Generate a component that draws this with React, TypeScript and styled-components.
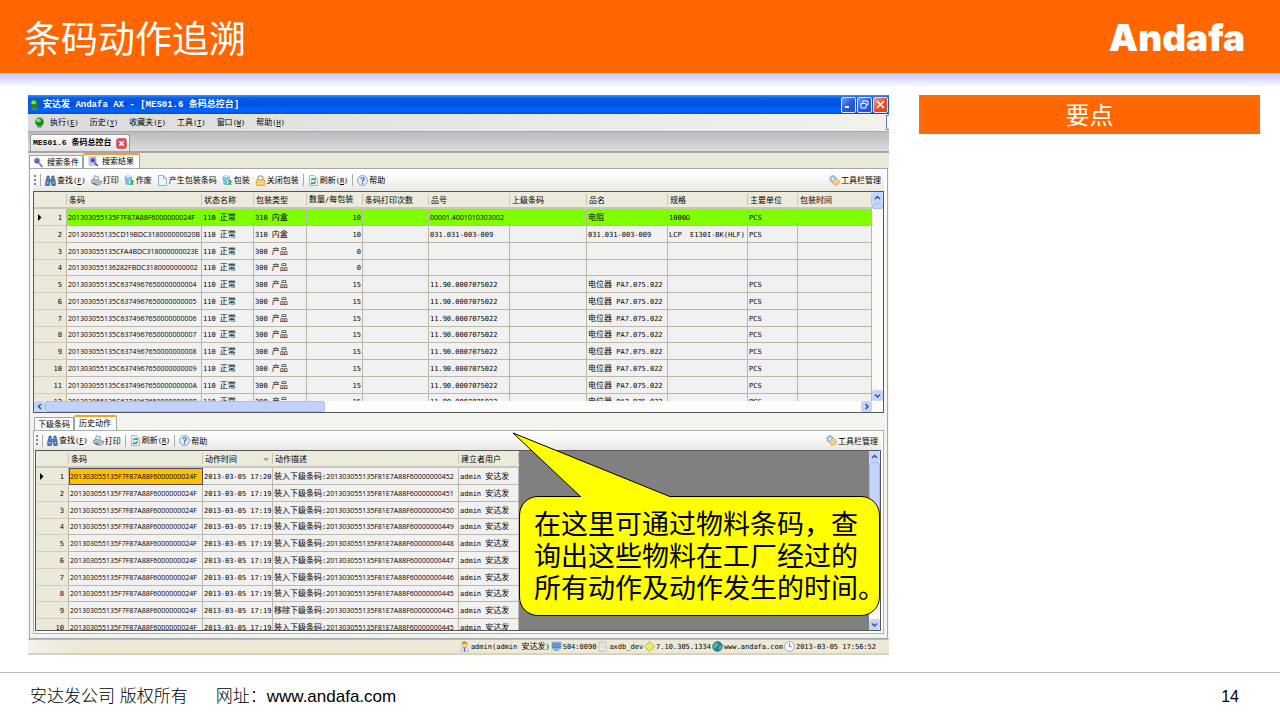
import React from "react";
import styled, { createGlobalStyle, css } from "styled-components";

const GlobalStyle = createGlobalStyle`
  *, *::before, *::after { box-sizing: border-box; }
  body { margin: 0; background: #fff; color: #000; font-family: "Liberation Sans", "Noto Sans CJK SC", sans-serif; }
  button { margin: 0; padding: 0; border: 0; background: none; color: inherit; font: inherit; white-space: nowrap; }
`;

/* ---------- slide ---------- */

const Slide = styled.div`
  display: flex;
  flex-direction: column;
  min-height: 100vh;
`;

const Header = styled.header`
  display: flex;
  align-items: center;
  justify-content: space-between;
  height: 73px;
  padding: 0 35px 0 24px;
  background: #ff6600;
  color: #fff;
`;

const Title = styled.h1`
  margin: 0;
  font: 400 37px/72px "Noto Sans CJK SC", sans-serif;
`;

const Brand = styled.div`
  font: 900 37px/76px Inter, sans-serif;
  padding-top: 2px;
`;

const HeaderShadow = styled.div`
  height: 14px;
  background: linear-gradient(#ccccff, #ccccff 20%, #fff);
`;

const Main = styled.main`
  flex: 1;
  display: grid;
  grid-template-columns: 861fr 341fr;
  align-items: start;
  gap: 30px;
  padding: 8px 20px 17px 28px;
`;

const KeyPoints = styled.h2`
  margin: 0;
  padding-bottom: 2px;
  background: #ff6600;
  border: 6px solid #ff6a08;
  color: #fff;
  text-align: center;
  font: 400 24px/25px "Noto Sans CJK SC", sans-serif;
`;

const Footer = styled.footer`
  display: flex;
  align-items: center;
  height: 48px;
  padding: 0 41px 0 30px;
  border-top: 1px solid #bcbcbc;
  font: 17px/24px "Liberation Sans", "Noto Sans CJK SC", sans-serif;
  font-weight: 300;
`;

const Site = styled.span`
  margin-left: 28px;
`;

const PageNumber = styled.span`
  margin-left: auto;
  font-size: 16px;
`;

/* ---------- application window ---------- */

const AppWindow = styled.section`
  position: relative;
  display: flex;
  flex-direction: column;
  background: #f4f3ee;
  font: 8px/12px "Noto Sans CJK SC", sans-serif;
`;

const Latin = styled.span<{ $code?: boolean }>`
  font-family: ${(p) => (p.$code ? '"Open Sans", sans-serif' : '"DejaVu Sans Mono", monospace')};
  font-size: 7px;
`;

const TitleBar = styled.div`
  display: flex;
  align-items: center;
  gap: 3px;
  height: 19px;
  padding: 0 1px;
  background: linear-gradient(#3a93ff, #0560f0 15%, #0050e0 45%, #0066ff 80%, #0050d8);
  color: #fff;
  font: 700 9px/14px "Liberation Mono", "Noto Sans CJK SC", monospace;
  white-space: pre;
`;

const WindowButtons = styled.div`
  display: flex;
  gap: 1px;
  margin-left: auto;
`;

const WindowButton = styled.button<{ $close?: boolean }>`
  display: flex;
  width: 15px;
  height: 16px;
  align-items: center;
  justify-content: center;
  border: 1px solid #dfe8ff;
  border-radius: 2px;
  background: ${(p) =>
    p.$close ? "linear-gradient(135deg, #f0a088, #e85028 50%, #d84818)" : "linear-gradient(135deg, #7a9cf4, #2a5ae0 50%, #2450cc)"};
`;

const MenuBar = styled.nav`
  display: flex;
  align-items: center;
  gap: 11px;
  height: 18px;
  padding: 0 0 0 6px;
  border-bottom: 1px solid #a8a8ac;
  background: linear-gradient(90deg, #dbdbdb, #f2f2ec);
`;

const MenuIcon = styled.span`
  display: flex;
  margin-right: -6px;
`;

const MenuEdge = styled.span`
  width: 3px;
  height: 15px;
  margin-left: auto;
  border: 1px solid #5a80e0;
  border-right: 0;
  background: #fff;
`;

const DocStrip = styled.div`
  display: flex;
  align-items: flex-end;
  height: 21px;
  padding: 0 2px 0;
  border-bottom: 2px solid #a5a4ae;
  background: linear-gradient(#bcbcc0, #dcdcde);
`;

const DocTab = styled.button`
  display: flex;
  align-items: center;
  gap: 5px;
  height: 17px;
  padding: 0 2px;
  border: 1px solid #9a9aa0;
  border-bottom: 0;
  border-radius: 3px 3px 0 0;
  background: linear-gradient(#fff, #e0e0e2);
  font: 700 8px/12px "Liberation Mono", "Noto Sans CJK SC", monospace;
`;

const TabRow = styled.div<{ $lower?: boolean }>`
  display: flex;
  align-items: flex-end;
  height: ${(p) => (p.$lower ? 17 : 15)}px;
  padding-left: 1px;
  background: ${(p) => (p.$lower ? "transparent" : "#ece9d8")};
`;

const Tab = styled.button<{ $active?: boolean }>`
  display: flex;
  align-items: center;
  gap: 3px;
  height: 13px;
  padding: 0 3px;
  border: 1px solid #98a8a8;
  border-bottom: 0;
  background: #fbfbf8;
  ${(p) =>
    p.$active &&
    css`
      height: 15px;
      padding: 0 5px 1px 4px;
      border-top: 2px solid #f8a020;
      border-radius: 2px 2px 0 0;
      background: #fff;
    `}
`;

const Page = styled.div`
  margin: 0 1px;
  padding: 0 3px 4px;
  border: 1px solid #a0a8b0;
  background: #f4f3ee;
`;

const UpperPanel = styled.div`
  margin: 0 -3px;
  padding: 0 3px;
  background: linear-gradient(#fff, #f6f5f0 60px);
`;

const LowerPanel = styled.div`
  padding: 0 2px 2px 1px;
  border: 1px solid #a8b0b0;
  background: #fdfdfb;
`;

const Toolbar = styled.div<{ $lower?: boolean }>`
  display: flex;
  align-items: center;
  gap: 5px;
  height: ${(p) => (p.$lower ? 19 : 22)}px;
  padding: 0 3px 0 1px;
  background: linear-gradient(#fff, #f9f9f8 40%, #e8e7e2);
`;

const ToolButton = styled.button`
  display: flex;
  align-items: center;
  gap: 1px;
`;

const Grip = styled.span`
  width: 2px;
  height: 11px;
  background: repeating-linear-gradient(#7484b4 0 2px, transparent 2px 4px);
`;

const Separator = styled.span`
  width: 1px;
  height: 12px;
  margin: 0 -1px;
  background: #aaa9a4;
`;

const Spacer = styled.span`
  flex: 1;
`;

const Frame = styled.div`
  border: 1px solid #55565a;
  background: #fff;
`;

const FrameBody = styled.div<{ $height: number; $fill: string }>`
  display: flex;
  height: ${(p) => p.$height}px;
  background: ${(p) => p.$fill};
`;

const Viewport = styled.div`
  flex: 1;
  min-width: 0;
  overflow: hidden;
`;

const Grid = styled.table<{ $fit?: boolean }>`
  width: ${(p) => (p.$fit ? "483px" : "100%")};
  table-layout: fixed;
  border-collapse: separate;
  border-spacing: 0;
  white-space: pre;
  line-height: 12px;
`;

const Col = styled.col<{ $width?: number }>`
  width: ${(p) => (p.$width ? `${p.$width}px` : "auto")};
`;

const HeadCell = styled.th`
  height: 17px;
  padding: 0 2px;
  overflow: hidden;
  border-bottom: 2px solid #cbc7b8;
  background: linear-gradient(90deg, #c9c6b6, #c9c6b6) right center / 1px 11px no-repeat, #ebeadb;
  text-align: left;
  font-weight: 400;
`;

const RowHead = styled.th`
  padding: 0 4px 0 3px;
  border-right: 1px solid #bdb9a6;
  border-bottom: 1px solid #d2cebc;
  background: #ebe9d9;
  text-align: right;
  font-weight: 400;
`;

const RowMark = styled.svg`
  float: left;
  margin-top: 3px;
`;

const Cell = styled.td<{ $right?: boolean; $picked?: boolean }>`
  padding: 0 1px;
  overflow: hidden;
  border-right: 1px solid #bbb8aa;
  border-bottom: 1px solid #bbb8aa;
  text-align: ${(p) => (p.$right ? "right" : "left")};
  ${(p) =>
    p.$picked &&
    css`
      background: #ffc000;
      outline: 1px solid #4a4a60;
      outline-offset: -1px;
    `}
`;

const Row = styled.tr<{ $on?: boolean }>`
  height: 17px;
  background: ${(p) => (p.$on ? "#80ff00" : "#f1f1f1")};
  &:nth-child(4n) { height: 16px; }
`;

const VScroll = styled.div`
  display: flex;
  flex-direction: column;
  width: 11px;
  background: #fbfaf5;
`;

const HScroll = styled.div`
  display: flex;
  height: 11px;
  padding-right: 11px;
  background: #fdfdfa;
`;

const ScrollButton = styled.button`
  display: flex;
  flex: none;
  align-items: center;
  justify-content: center;
  width: 11px;
  height: 11px;
  border-radius: 2px;
  background: #c4d4fb;
`;

const Thumb = styled.div<{ $w?: number; $h?: number }>`
  width: ${(p) => (p.$w ? `${p.$w}px` : "auto")};
  height: ${(p) => (p.$h ? `${p.$h}px` : "auto")};
  border: 1px solid #a8bdf0;
  border-radius: 2px;
  background: #c2d2fc;
`;

const StatusBar = styled.div`
  display: flex;
  align-items: center;
  justify-content: flex-end;
  gap: 1px;
  height: 16px;
  padding-right: 13px;
  border-top: 1px solid #bdb9a8;
  border-bottom: 2px solid #d8d4bc;
  background: linear-gradient(90deg, #f2f1ec, #ece9d8 50px);
  white-space: pre;
`;

const StatusItem = styled.span`
  display: flex;
  align-items: center;
  gap: 1px;
`;

const Callout = styled.aside`
  position: absolute;
  left: 491px;
  top: 401px;
  width: 361px;
  padding: 10px 0 12px 14px;
  border: 1px solid #000;
  border-radius: 19px;
  background: #ffff00;
  font: 27px/32px "Noto Sans CJK SC", sans-serif;
  white-space: pre;
`;

const Tail = styled.svg`
  position: absolute;
  left: -8px;
  top: -65px;
`;

/* ---------- text ---------- */

/** Sets the Latin runs of a mixed string in half-width type, and long codes in a narrower face. */
const Mixed = ({ text }: { text: string }) => (
  <>
    {text.split(/([\u2e80-\u9fff]+|[0-9A-F.]{19,})/).map((run, i) =>
      !run ? null : /[\u2e80-\u9fff]/.test(run) ? run : (
        <Latin key={i} $code={/^[0-9A-F.]{19,}$/.test(run)}>{run}</Latin>
      )
    )}
  </>
);

const Labelled = ({ text, mnemonic }: { text: string; mnemonic?: string }) => (
  <span>
    {text}
    {mnemonic && <Latin>(<u>{mnemonic}</u>)</Latin>}
  </span>
);

/* ---------- icons ---------- */

type IconName =
  | "find" | "print" | "recycle" | "page" | "lock" | "refresh" | "help" | "gears"
  | "search" | "searchDoc" | "ball" | "user" | "monitor" | "db" | "tag" | "globe" | "clock" | "close";

const shapes: Record<IconName, React.ReactNode> = {
  find: (
    <g fill="#4a78b8" stroke="#234a86" strokeWidth=".6">
      <path d="M2.2 1h1.800l.8 5.500-.4 4H.7V7z" /><path d="M7 1h1.800l1.500 6v3.500H6.800l-.6-4z" />
      <path d="M4.400 4.200h2.200v2.200H4.400z" fill="#9cc0ea" /><path d="M1.500 7.800h2M7.500 7.800h2M2.600 3.200h1M7.400 3.200h1" stroke="#dcebff" strokeWidth=".9" />
    </g>
  ),
  print: (
    <g strokeWidth=".6" stroke="#6a7484">
      <path d="M2.400 4.800 3.200.6l4.400 1.300-.6 4z" fill="#d4e8ff" />
      <path d="M.5 5.400 3 4.200l7.500 2v2.400L7.400 10.500.5 8.200z" fill="#ccd2dc" />
      <path d="M.7 5.600 7.400 8l2.800-1.700" fill="none" /><path d="M2 8.400l4 1.300" stroke="#2a3444" strokeWidth=".9" />
    </g>
  ),
  recycle: (
    <>
      <path d="M.8 1.500C3 .6 6 .8 7.600 1.600L7 9C5.400 9.800 3.200 9.600 2 9z" fill="#7cc0ea" stroke="#4a90c8" strokeWidth=".5" />
      <ellipse cx="4.200" cy="1.700" rx="3.300" ry=".8" fill="#d4f0ff" />
      <path d="M5 4.800h5.500v5.700H5z" fill="#eefaf0" />
      <path d="M6 6.500q1.800-1.800 3.200 0L6.400 9.200h3" fill="none" stroke="#1c9c48" strokeWidth="1.200" />
    </>
  ),
  page: (
    <g stroke="#7a94b8" strokeWidth=".7">
      <path d="M1.500.5h5l3 3v7h-8z" fill="#eef5ff" /><path d="M6.500.5v3h3" fill="#cfe0f6" />
    </g>
  ),
  lock: (
    <>
      <path d="M3 5V3.300a2.500 2.500 0 0 1 5 0V5" fill="none" stroke="#a8a8a8" strokeWidth="1.300" />
      <rect x="1.300" y="4.800" width="8.400" height="5.700" rx=".8" fill="#f8c860" stroke="#c88820" strokeWidth=".6" />
      <path d="M2.200 6.600h6.600M2.200 8.600h6.600" stroke="#ffeab0" strokeWidth=".8" />
    </>
  ),
  refresh: (
    <>
      <path d="M1.500.5h5l3 3v7h-8z" fill="#e4f0fc" stroke="#88a4c4" strokeWidth=".7" />
      <path d="M3.500 5.200Q5 3 7 4.600L7.300 3M7.500 6.500Q6 9.500 3.900 7.900L3.500 9.400" fill="none" stroke="#189838" strokeWidth="1.300" />
    </>
  ),
  help: (
    <>
      <circle cx="5.500" cy="5.500" r="4.900" fill="#e6f0fe" stroke="#5a84c4" strokeWidth=".8" />
      <path d="M3.900 4.300Q4 2.700 5.600 2.700T7.200 4.200Q7.200 5 5.600 6V6.900" fill="none" stroke="#2458b8" strokeWidth="1.100" />
      <circle cx="5.600" cy="8.300" r=".7" fill="#2458b8" />
    </>
  ),
  gears: (
    <>
      <circle cx="4" cy="4" r="3.200" fill="#9cd0f4" stroke="#5a9cd0" strokeWidth="1" strokeDasharray="1.400 .5" />
      <circle cx="4" cy="4" r="1" fill="#fff" />
      <circle cx="7" cy="7" r="3.300" fill="#f8d090" stroke="#d8a048" strokeWidth="1" strokeDasharray="1.400 .5" />
      <circle cx="7" cy="7" r="1.200" fill="#fff8ea" stroke="#d09840" strokeWidth=".5" />
    </>
  ),
  search: (
    <>
      <path d="M6 6l3.500 3.800" stroke="#7c7c84" strokeWidth="1.800" />
      <circle cx="4" cy="3.800" r="2.900" fill="#6848c0" stroke="#b8b8e0" strokeWidth="1" />
      <circle cx="3.400" cy="3" r=".8" fill="#b8a8f0" />
    </>
  ),
  searchDoc: (
    <>
      <path d="M1 .8h7v8.500H1z" fill="#c4d4f0" stroke="#8898c0" strokeWidth=".5" />
      <path d="M6.500 6.500l3.300 3.500" stroke="#58586c" strokeWidth="1.600" />
      <circle cx="4.900" cy="4.300" r="2.500" fill="#6040b8" stroke="#a8b0d8" strokeWidth=".9" />
    </>
  ),
  ball: (
    <>
      <path d="M3 8.500h5l-.6 2H3.600z" fill="#7c8c7c" />
      <ellipse cx="5.500" cy="5" rx="4.300" ry="4.400" fill="#1c8c1c" />
      <ellipse cx="4.600" cy="3.400" rx="2.300" ry="1.900" fill="#8cdc70" />
    </>
  ),
  user: (
    <>
      <path d="M1.800 10.800q0-4.600 3.700-4.600t3.700 4.600z" fill="#e8ecfa" stroke="#7888b8" strokeWidth=".5" />
      <path d="M5.500 6.500v4" stroke="#4868d8" strokeWidth="1.300" />
      <circle cx="5.500" cy="3.600" r="2.500" fill="#fcd8a8" stroke="#b87838" strokeWidth=".4" />
      <path d="M2.800 3.200Q3 .4 5.500.4t2.700 2.800Q5.500 1.800 2.800 3.200z" fill="#d07820" />
    </>
  ),
  monitor: (
    <>
      <rect x="1" y="1.200" width="9" height="6.600" fill="#4888d8" stroke="#a0b4cc" strokeWidth=".9" />
      <path d="M2 3h7M2 5h7" stroke="#88b8f0" strokeWidth=".7" /><path d="M3.500 8.200h4l1 1.800h-6z" fill="#98a4b4" />
    </>
  ),
  db: (
    <>
      <rect x="2" y="1" width="7" height="9.200" rx=".8" fill="#f0f0ee" stroke="#98a0a8" strokeWidth=".6" />
      <path d="M3.300 3h4.400M3.300 5h4.400M3.300 7h4.400" stroke="#c4ccd4" strokeWidth=".8" />
    </>
  ),
  tag: <path d="M5.500.5l5 5-5 5-5-5z" fill="#f0e870" stroke="#a89c28" strokeWidth=".7" />,
  globe: (
    <>
      <circle cx="5.500" cy="5.500" r="4.900" fill="#2474c8" stroke="#184c88" strokeWidth=".5" />
      <path d="M2 2.500Q5 .5 6 2.500T4.500 6 3 8.500Q0 5.500 2 2.500zM7 5q2.500-1 3 .6Q9.500 9 7 9.500z" fill="#58c050" />
    </>
  ),
  clock: (
    <>
      <circle cx="5.500" cy="5.500" r="4.900" fill="#fbfbfd" stroke="#8c94a4" strokeWidth=".8" />
      <path d="M5.500 2.200v3.500h2.300" fill="none" stroke="#586478" strokeWidth=".8" />
    </>
  ),
  close: (
    <>
      <rect x=".6" y=".6" width="9.800" height="9.800" rx="2" fill="#e05058" stroke="#b03840" strokeWidth=".6" />
      <path d="M3.400 3.400l4.200 4.200M7.600 3.400L3.400 7.600" stroke="#fff" strokeWidth="1.500" />
    </>
  ),
};

const Icon = ({ name }: { name: IconName }) => (
  <svg width="11" height="11" viewBox="0 0 11 11" aria-hidden="true">{shapes[name]}</svg>
);

const arrows = { up: "M1 5l2.500-2.500L6 5", down: "M1 2.500L3.500 5 6 2.500", left: "M5 1L2.500 3.500 5 6", right: "M2.500 1L5 3.500 2.500 6" };

const Arrow = ({ to }: { to: keyof typeof arrows }) => (
  <ScrollButton aria-label={to}>
    <svg width="7" height="7"><path d={arrows[to]} fill="none" stroke="#3c5480" strokeWidth="1.500" /></svg>
  </ScrollButton>
);

const Marker = () => (
  <RowMark width="5" height="7"><path d="M1 0l3.500 3.500L1 7z" /></RowMark>
);

/* ---------- data ---------- */

type Tool = { icon: IconName; text: string; mnemonic?: string } | "sep";

const menus: [string, string][] = [["执行", "E"], ["历史", "Y"], ["收藏夹", "F"], ["工具", "T"], ["窗口", "W"], ["帮助", "H"]];

const upperTools: Tool[] = [
  { icon: "find", text: "查找", mnemonic: "F" }, { icon: "print", text: "打印" }, { icon: "recycle", text: "作废" },
  { icon: "page", text: "产生包装条码" }, { icon: "recycle", text: "包装" }, { icon: "lock", text: "关闭包装" },
  "sep", { icon: "refresh", text: "刷新", mnemonic: "R" }, "sep", { icon: "help", text: "帮助" },
];

const lowerTools: Tool[] = [
  { icon: "find", text: "查找", mnemonic: "F" }, { icon: "print", text: "打印" },
  "sep", { icon: "refresh", text: "刷新", mnemonic: "R" }, "sep", { icon: "help", text: "帮助" },
];

const upperCols = [
  { title: "", w: 33 }, { title: "条码", w: 135 }, { title: "状态名称", w: 52 }, { title: "包装类型", w: 53 },
  { title: "数量/每包装", w: 56 }, { title: "条码打印次数", w: 66 }, { title: "品号", w: 81 }, { title: "上级条码", w: 77 },
  { title: "品名", w: 81 }, { title: "规格", w: 80 }, { title: "主要单位", w: 50 }, { title: "包装时间", w: undefined },
];

const part = (code: string) =>
  [`201303055135C6374967650000000${code}`, "110 正常", "300 产品", "15", "", "11.90.0007075022", "", "电位器 PA7.075.022", "", "PCS", ""];

const upperRows = [
  ["201303055135F7F87A88F6000000024F", "110 正常", "310 内盒", "10", "", "00001.4001010303002", "", "电阻", "1000Ω", "PCS", ""],
  ["201303055135CD19BDC318000000020B", "110 正常", "310 内盒", "10", "", "031.031-003-009", "", "031.031-003-009", "LCP  E130I-BK(HLF)", "PCS", ""],
  ["201303055135CFA4BDC318000000023E", "110 正常", "300 产品", "0", "", "", "", "", "", "", ""],
  ["201303055136282FBDC3180000000002", "110 正常", "300 产品", "0", "", "", "", "", "", "", ""],
  ...["004", "005", "006", "007", "008", "009", "00A", "00B"].map(part),
];

const lowerCols = [
  { title: "", w: 33 }, { title: "条码", w: 134 }, { title: "动作时间", w: 70 }, { title: "动作描述", w: 186 }, { title: "建立者用户", w: 60 },
];

const lowerRows = ["452", "451", "450", "449", "448", "447", "446", "445", "445", "445"].map((end, i) => [
  "201303055135F7F87A88F6000000024F",
  `2013-03-05 17:${i === 0 ? "20" : "19"}`,
  `${i === 8 ? "移除" : "装入"}下级条码:201303055135F81E7A88F60000000${end}`,
  "admin 安达发",
]);

const statuses: [IconName, string][] = [
  ["user", "admin(admin 安达发)"], ["monitor", "S04:8090"], ["db", "axdb_dev"], ["tag", "7.10.305.1334"],
  ["globe", "www.andafa.com"], ["clock", "2013-03-05 17:56:52"],
];

/* ---------- composition ---------- */

const Tools = ({ items, lower }: { items: Tool[]; lower?: boolean }) => (
  <Toolbar $lower={lower} role="toolbar">
    <Grip />
    <Separator />
    {items.map((t, i) =>
      t === "sep" ? <Separator key={i} /> : (
        <ToolButton key={i}><Icon name={t.icon} /><Labelled text={t.text} mnemonic={t.mnemonic} /></ToolButton>
      )
    )}
    <Spacer />
    <ToolButton><Icon name="gears" />工具栏管理</ToolButton>
  </Toolbar>
);

const ResultTable = () => (
  <Grid>
    <colgroup>{upperCols.map((c, i) => <Col key={i} $width={c.w} />)}</colgroup>
    <thead><tr>{upperCols.map((c, i) => <HeadCell key={i} scope="col"><Mixed text={c.title} /></HeadCell>)}</tr></thead>
    <tbody>
      {upperRows.map((r, i) => (
        <Row key={i} $on={i === 0}>
          <RowHead scope="row">{i === 0 && <Marker />}<Latin>{i + 1}</Latin></RowHead>
          {r.map((v, j) => <Cell key={j} $right={j === 3}><Mixed text={v} /></Cell>)}
        </Row>
      ))}
    </tbody>
  </Grid>
);

const SortMark = styled.svg`
  float: right;
  margin: 5px 2px 0 0;
`;

const HistoryTable = () => (
  <Grid $fit>
    <colgroup>{lowerCols.map((c, i) => <Col key={i} $width={c.w} />)}</colgroup>
    <thead>
      <tr>
        {lowerCols.map((c, i) => (
          <HeadCell key={i} scope="col">
            {i === 2 && <SortMark width="6" height="4"><path d="M0 0h6L3 3.500z" fill="#a8a698" /></SortMark>}
            {c.title}
          </HeadCell>
        ))}
      </tr>
    </thead>
    <tbody>
      {lowerRows.map((r, i) => (
        <Row key={i}>
          <RowHead scope="row">{i === 0 && <Marker />}<Latin>{i + 1}</Latin></RowHead>
          {r.map((v, j) => <Cell key={j} $picked={i === 0 && j === 0}><Mixed text={v} /></Cell>)}
        </Row>
      ))}
    </tbody>
  </Grid>
);

export default function App() {
  return (
    <Slide>
      <GlobalStyle />
      <Header>
        <Title>条码动作追溯</Title>
        <Brand>Andafa</Brand>
      </Header>
      <HeaderShadow />
      <Main>
        <AppWindow>
          <TitleBar>
            <Icon name="ball" />
            <span>安达发 Andafa AX - [MES01.6 条码总控台]</span>
            <WindowButtons>
              <WindowButton aria-label="最小化"><svg width="9" height="9"><path d="M1 7h4" stroke="#fff" strokeWidth="2" /></svg></WindowButton>
              <WindowButton aria-label="还原">
                <svg width="9" height="9"><path d="M3 3V1h5v4H6M1 3.500h5v4.500H1z" fill="none" stroke="#fff" /></svg>
              </WindowButton>
              <WindowButton $close aria-label="关闭">
                <svg width="9" height="9"><path d="M1 1l7 7M8 1L1 8" stroke="#fff" strokeWidth="1.600" /></svg>
              </WindowButton>
            </WindowButtons>
          </TitleBar>
          <MenuBar>
            <MenuIcon><Icon name="ball" /></MenuIcon>
            {menus.map(([text, key]) => <button key={text}><Labelled text={text} mnemonic={key} /></button>)}
            <MenuEdge />
          </MenuBar>
          <DocStrip>
            <DocTab>MES01.6 条码总控台<Icon name="close" /></DocTab>
          </DocStrip>
          <TabRow>
            <Tab><Icon name="search" />搜索条件</Tab>
            <Tab $active><Icon name="searchDoc" />搜索结果</Tab>
          </TabRow>
          <Page>
            <UpperPanel>
              <Tools items={upperTools} />
              <Frame>
                <FrameBody $height={209} $fill="#f1f1f1">
                  <Viewport><ResultTable /></Viewport>
                  <VScroll><Arrow to="up" /><Thumb $h={6} /><Spacer /><Arrow to="down" /></VScroll>
                </FrameBody>
                <HScroll><Arrow to="left" /><Thumb $w={280} /><Spacer /><Arrow to="right" /></HScroll>
              </Frame>
            </UpperPanel>
            <TabRow $lower>
              <Tab>下级条码</Tab>
              <Tab $active>历史动作</Tab>
            </TabRow>
            <LowerPanel>
              <Tools items={lowerTools} lower />
              <Frame>
                <FrameBody $height={179} $fill="#808080">
                  <Viewport><HistoryTable /></Viewport>
                  <VScroll><Arrow to="up" /><Thumb $h={112} /><Spacer /><Arrow to="down" /></VScroll>
                </FrameBody>
              </Frame>
            </LowerPanel>
          </Page>
          <StatusBar>
            {statuses.map(([icon, text]) => <StatusItem key={icon}><Icon name={icon} /><span><Mixed text={text} /></span></StatusItem>)}
          </StatusBar>
          <Callout>
            <Tail width="170" height="66"><path d="M69 65L1 1l158 64" fill="#ffff00" stroke="#000" /></Tail>
            {"在这里可通过物料条码，查\n询出这些物料在工厂经过的\n所有动作及动作发生的时间。"}
          </Callout>
        </AppWindow>
        <KeyPoints>要点</KeyPoints>
      </Main>
      <Footer>
        <span>安达发公司 版权所有</span>
        <Site>网址：www.andafa.com</Site>
        <PageNumber>14</PageNumber>
      </Footer>
    </Slide>
  );
}
